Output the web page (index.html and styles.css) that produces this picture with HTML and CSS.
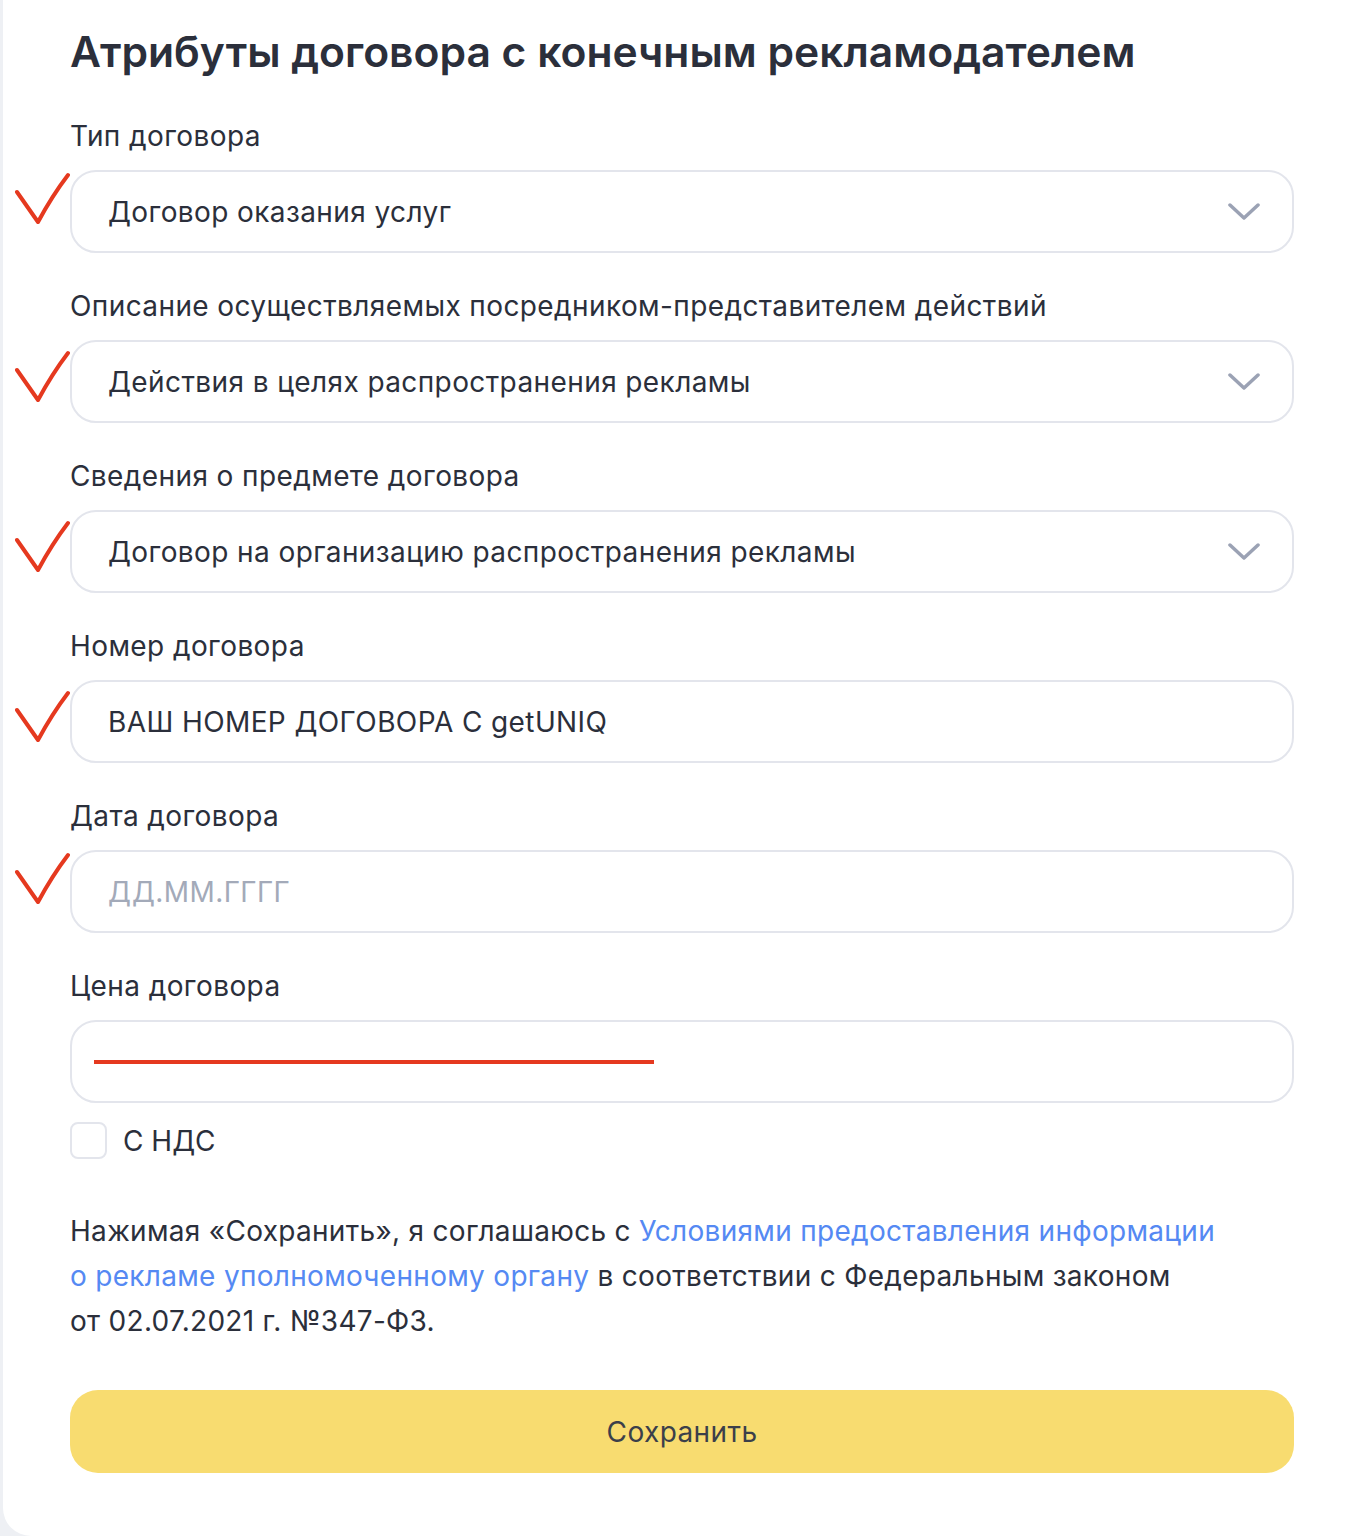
FILE: index.html
```html
<!DOCTYPE html>
<html>

<head>
    <title>Атрибуты договора</title>
    <link rel="stylesheet" href="styles.css">
</head>

<body>
    <div class="card">
        <h1 class="title">Атрибуты договора с конечным рекламодателем</h1>

        <div class="field">
            <div class="label">Тип договора</div>
            <svg class="mark" viewBox="0 0 56 56"><path d="M3 20 L24 50 Q38 24 54 3" /></svg>
            <div class="box select">
                <span>Договор оказания услуг</span>
                <svg class="chevron" viewBox="0 0 32 18"><path d="M2 2 L16 15 L30 2" /></svg>
            </div>
        </div>

        <div class="field">
            <div class="label">Описание осуществляемых посредником-представителем действий</div>
            <svg class="mark mark-low" viewBox="0 0 56 56"><path d="M3 20 L24 50 Q38 24 54 3" /></svg>
            <div class="box select">
                <span>Действия в целях распространения рекламы</span>
                <svg class="chevron" viewBox="0 0 32 18"><path d="M2 2 L16 15 L30 2" /></svg>
            </div>
        </div>

        <div class="field">
            <div class="label">Сведения о предмете договора</div>
            <svg class="mark mark-low" viewBox="0 0 56 56"><path d="M3 20 L24 50 Q38 24 54 3" /></svg>
            <div class="box select">
                <span>Договор на организацию распространения рекламы</span>
                <svg class="chevron" viewBox="0 0 32 18"><path d="M2 2 L16 15 L30 2" /></svg>
            </div>
        </div>

        <div class="field">
            <div class="label">Номер договора</div>
            <svg class="mark mark-low" viewBox="0 0 56 56"><path d="M3 20 L24 50 Q38 24 54 3" /></svg>
            <div class="box">
                <span>ВАШ НОМЕР ДОГОВОРА С getUNIQ</span>
            </div>
        </div>

        <div class="field">
            <div class="label">Дата договора</div>
            <svg class="mark" viewBox="0 0 56 56"><path d="M3 20 L24 50 Q38 24 54 3" /></svg>
            <div class="box">
                <span class="placeholder">ДД.ММ.ГГГГ</span>
            </div>
        </div>

        <div class="field field-last">
            <div class="label">Цена договора</div>
            <div class="box price">
                <div class="strike"></div>
            </div>
        </div>

        <label class="checkbox-row">
            <span class="checkbox"></span>
            <span>С НДС</span>
        </label>

        <p class="terms">
            Нажимая «Сохранить», я соглашаюсь с <a href="#">Условиями предоставления информации<br>
            о рекламе уполномоченному органу</a> в соответствии с Федеральным законом<br>
            от 02.07.2021 г. №347-ФЗ.
        </p>

        <button class="save-button">Сохранить</button>
    </div>
</body>

</html>
```

FILE: styles.css
```css
* {
    margin: 0;
    padding: 0;
    box-sizing: border-box;
    font-family: 'Inter', 'Noto Sans', sans-serif;
}

body {
    background: #eef0f4;
}

.card {
    margin-left: 3px;
    min-height: 1536px;
    background: #fff;
    border-bottom-left-radius: 28px;
    padding: 26px 57px 0 67px;
    color: #2b2f3b;
}

.title {
    font-size: 42.6px;
    line-height: 52px;
    font-weight: 600;
    margin-bottom: 40px;
}

.field {
    display: grid;
    grid-template-columns: 1fr;
    margin-bottom: 35px;
    position: relative;
}

.field-last {
    margin-bottom: 19px;
}

.label {
    font-size: 28px;
    line-height: 36px;
    letter-spacing: 0.4px;
    margin-bottom: 16px;
}

/* red hand-drawn ticks in the left gutter */
.mark {
    position: absolute;
    left: -56px;
    top: 54px;
    width: 56px;
    height: 56px;
    fill: none;
    stroke: #e5391f;
    stroke-width: 4;
    stroke-linecap: round;
    stroke-linejoin: round;
}

.mark-low {
    top: 62px;
}

.box {
    height: 83px;
    border: 2px solid #e3e5ec;
    border-radius: 26px;
    display: flex;
    align-items: center;
    justify-content: space-between;
    padding: 0 32px 0 36px;
    font-size: 28px;
    letter-spacing: 0.4px;
}

.placeholder {
    color: #a3aab9;
}

.chevron {
    width: 32px;
    height: 18px;
    fill: none;
    stroke: #9ba2b4;
    stroke-width: 3.5;
    stroke-linecap: round;
    stroke-linejoin: round;
}

.price {
    padding-left: 22px;
}

.strike {
    width: 560px;
    height: 4px;
    background: #e5391f;
}

.checkbox-row {
    display: flex;
    align-items: center;
    gap: 16px;
    font-size: 28px;
    margin-bottom: 50px;
}

.checkbox {
    width: 37px;
    height: 37px;
    border: 2px solid #e3e5ec;
    border-radius: 8px;
}

.terms {
    font-size: 28px;
    line-height: 45px;
    letter-spacing: 0.3px;
    margin-bottom: 46px;
}

.terms a {
    color: #5589f3;
    text-decoration: none;
}

.save-button {
    width: 100%;
    height: 83px;
    border: none;
    border-radius: 28px;
    background: #f8dc70;
    color: #3b3f4a;
    font-size: 28px;
    letter-spacing: 0.4px;
    cursor: pointer;
}
```
